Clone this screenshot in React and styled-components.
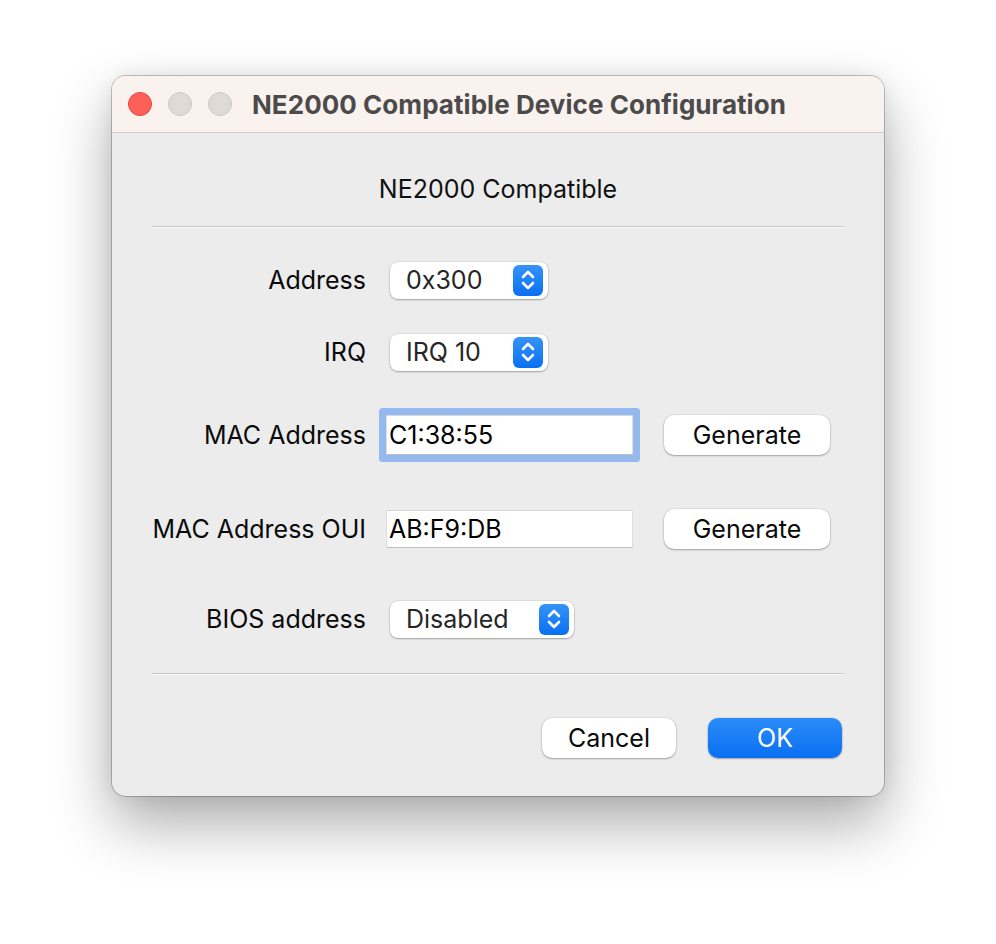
import React from 'react';
import styled, { createGlobalStyle } from 'styled-components';

const Global = createGlobalStyle`
  html, body {
    margin: 0;
    background: #fff;
  }
  body {
    font-family: Inter, "Noto Sans", "Liberation Sans", sans-serif;
    -webkit-font-smoothing: antialiased;
  }
`;

const Page = styled.div`
  height: 944px;
  padding: 76px 0 0 112px;
  box-sizing: border-box;
`;

const Window = styled.div`
  width: 772px;
  height: 720px;
  box-sizing: border-box;
  border-radius: 14px;
  background: #ececec;
  overflow: hidden;
  box-shadow: 0 0 0 1px rgba(0, 0, 0, 0.22), 0 28px 60px rgba(0, 0, 0, 0.33), 0 0 20px rgba(0, 0, 0, 0.08);
  display: flex;
  flex-direction: column;
`;

const TitleBar = styled.div`
  height: 57px;
  flex: none;
  box-sizing: border-box;
  background: #faf2ee;
  border-bottom: 1px solid #cfcbc9;
  display: flex;
  align-items: center;
  padding-left: 16px;
  gap: 16px;
`;

const Light = styled.span`
  width: 24px;
  height: 24px;
  border-radius: 50%;
  box-sizing: border-box;
  background: ${p => p.$color};
  border: 1px solid ${p => p.$edge};
`;

const Title = styled.h1`
  margin: 0 0 0 4px;
  font-size: 26px;
  font-weight: 700;
  color: #4b4b4b;
  letter-spacing: 0.05px;
`;

const Body = styled.div`
  padding: 41px 40px 0;
  display: flex;
  flex-direction: column;
`;

const Subtitle = styled.div`
  text-align: center;
  font-size: 25px;
  line-height: 30px;
  color: #111;
`;

const Separator = styled.div`
  height: 1px;
  background: #c9c9c9;
  border-bottom: 1px solid #fafafa;
  margin-top: ${p => p.$top}px;
`;

const Row = styled.div`
  display: grid;
  grid-template-columns: 214px 1fr;
  column-gap: 20px;
  align-items: center;
  height: 40px;
  margin-top: ${p => p.$top}px;
`;

const Label = styled.label`
  text-align: right;
  font-size: 25px;
  color: #0a0a0a;
  white-space: nowrap;
`;

const Controls = styled.div`
  display: flex;
  align-items: center;
  gap: 31px;
`;

const Popup = styled.div`
  margin-left: 4px;
  width: ${p => p.$width}px;
  height: 37px;
  box-sizing: border-box;
  background: #fff;
  border-radius: 8px;
  box-shadow: 0 0 0 0.5px rgba(0, 0, 0, 0.12), 0 1px 2px rgba(0, 0, 0, 0.28);
  display: flex;
  align-items: center;
  justify-content: space-between;
  padding: 0 5px 0 16px;
  font-size: 25px;
  color: #262626;
`;

const Stepper = styled.span`
  width: 30px;
  height: 31px;
  border-radius: 6px;
  background: linear-gradient(#3593f8, #0a70f2);
  display: flex;
  align-items: center;
  justify-content: center;
`;

const Field = styled.input`
  width: 247px;
  height: ${p => (p.$focused ? 40 : 38)}px;
  box-sizing: border-box;
  border: none;
  border-top: 1px solid #d6d6d6;
  border-left: 1px solid #dedede;
  border-right: 1px solid #dedede;
  border-bottom: 1px solid #bdbdbd;
  border-radius: 1px;
  background: #fff;
  padding: 0 2px;
  font-family: inherit;
  font-size: 25px;
  color: #000;
  outline: none;
  box-shadow: ${p => (p.$focused ? '0 0 0 7px #94b9ee' : 'none')};
`;

const Button = styled.button`
  width: ${p => p.$width || 134}px;
  height: 40px;
  border: none;
  border-radius: 10px;
  font-family: inherit;
  font-size: 25px;
  color: ${p => (p.$primary ? '#fff' : '#0a0a0a')};
  background: ${p => (p.$primary ? 'linear-gradient(#2a8cf8, #0a6ff2)' : '#fff')};
  box-shadow: 0 0 0 0.5px rgba(0, 0, 0, 0.12), 0 1px 2px rgba(0, 0, 0, 0.28);
  padding: 0;
`;

const Footer = styled.div`
  display: flex;
  justify-content: flex-end;
  gap: 32px;
  margin-top: 43px;
  padding-right: 2px;
`;

const Chevrons = () => (
  <svg width="16" height="22" viewBox="0 0 16 22" fill="none" stroke="#fff" strokeWidth="2.6" strokeLinecap="round" strokeLinejoin="round">
    <path d="M3 8 L8 3 L13 8" />
    <path d="M3 14 L8 19 L13 14" />
  </svg>
);

const Select = ({ value, width }) => (
  <Popup $width={width}>
    <span>{value}</span>
    <Stepper><Chevrons /></Stepper>
  </Popup>
);

export default function App() {
  return (
    <Page>
      <Global />
      <Window>
        <TitleBar>
          <Light $color="#fe5f57" $edge="#e2463f" />
          <Light $color="#e0dad6" $edge="#cdc6c2" />
          <Light $color="#e0dad6" $edge="#cdc6c2" />
          <Title>NE2000 Compatible Device Configuration</Title>
        </TitleBar>
        <Body>
          <Subtitle>NE2000 Compatible</Subtitle>
          <Separator $top={22} />

          <Row $top={32}>
            <Label>Address</Label>
            <Controls><Select value="0x300" width={158} /></Controls>
          </Row>
          <Row $top={32}>
            <Label>IRQ</Label>
            <Controls><Select value="IRQ 10" width={158} /></Controls>
          </Row>
          <Row $top={43}>
            <Label>MAC Address</Label>
            <Controls>
              <Field $focused defaultValue="C1:38:55" />
              <Button $width={166}>Generate</Button>
            </Controls>
          </Row>
          <Row $top={54}>
            <Label>MAC Address OUI</Label>
            <Controls>
              <Field defaultValue="AB:F9:DB" />
              <Button $width={166}>Generate</Button>
            </Controls>
          </Row>
          <Row $top={50}>
            <Label>BIOS address</Label>
            <Controls><Select value="Disabled" width={184} /></Controls>
          </Row>

          <Separator $top={34} />
          <Footer>
            <Button>Cancel</Button>
            <Button $primary>OK</Button>
          </Footer>
        </Body>
      </Window>
    </Page>
  );
}
